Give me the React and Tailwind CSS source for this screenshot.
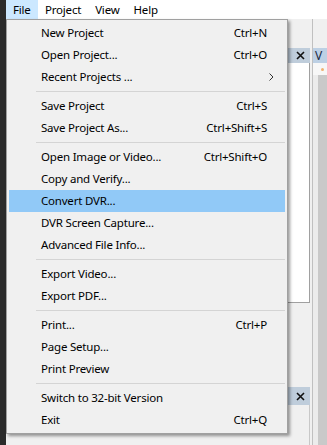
import React from 'react'

const FONT = { fontFamily: '"Noto Sans", "Segoe UI", Arial, sans-serif' }

const MENU = [
  { label: 'New Project', key: 'Ctrl+N' },
  { label: 'Open Project...', key: 'Ctrl+O' },
  { label: 'Recent Projects ...', sub: true },
  'sep',
  { label: 'Save Project', key: 'Ctrl+S' },
  { label: 'Save Project As...', key: 'Ctrl+Shift+S' },
  'sep',
  { label: 'Open Image or Video...', key: 'Ctrl+Shift+O' },
  { label: 'Copy and Verify...' },
  { label: 'Convert DVR...', active: true },
  { label: 'DVR Screen Capture...' },
  { label: 'Advanced File Info...' },
  'sep',
  { label: 'Export Video...' },
  { label: 'Export PDF...' },
  'sep',
  { label: 'Print...', key: 'Ctrl+P' },
  { label: 'Page Setup...' },
  { label: 'Print Preview' },
  'sep',
  { label: 'Switch to 32-bit Version' },
  { label: 'Exit', key: 'Ctrl+Q' },
]

function CloseX() {
  return (
    <svg width="9" height="9" viewBox="0 0 9 9">
      <path d="M1 1 L8 8 M8 1 L1 8" stroke="#111" strokeWidth="1.6" />
    </svg>
  )
}

function FileMenu() {
  return (
    <div className="absolute left-[6px] top-[19px] w-[282px] h-[415px] bg-[#f0f0f0] border border-[#a0a0a0] shadow-[2px_2px_3px_rgba(0,0,0,0.4)] py-[2px] text-[11.5px] tracking-[-0.2px] text-black">
      {MENU.map((item, i) => {
        if (item === 'sep') {
          return (
            <div key={i} className="h-[7px] flex items-center ml-[29px] mr-[2px]">
              <div className="h-px w-full bg-[#d4d4d4]" />
            </div>
          )
        }
        return (
          <div
            key={i}
            className={`h-[22px] mx-[2px] flex items-center pl-[32px] pr-[18px] ${item.active ? 'bg-[#91c9f7]' : ''}`}
          >
            <span className="flex-1 whitespace-nowrap">{item.label}</span>
            {item.key && <span className="whitespace-nowrap">{item.key}</span>}
            {item.sub && (
              <svg width="5" height="8" viewBox="0 0 5 8" className="mr-[-7px]">
                <path d="M0.5 0.5 L4 4 L0.5 7.5" stroke="#333" fill="none" strokeWidth="1" />
              </svg>
            )}
          </div>
        )
      })}
    </div>
  )
}

export default function App() {
  return (
    <div className="relative w-[327px] h-[445px] overflow-hidden flex bg-[#f0f0f0]" style={FONT}>
      {/* dark edge of the window behind */}
      <div className="w-[6px] bg-[#2b2b2b]" />

      <div className="flex-1 flex flex-col">
        {/* menu bar */}
        <div className="h-[19px] bg-white flex items-stretch text-[11.5px] tracking-[-0.2px] text-black">
          <div className="w-[32px] pl-[7px] flex items-center bg-[#cce8ff]">File</div>
          <div className="px-[7px] flex items-center">Project</div>
          <div className="px-[7px] flex items-center">View</div>
          <div className="px-[7px] flex items-center">Help</div>
        </div>

        {/* workspace behind the menu */}
        <div className="flex-1 flex">
          <div className="flex-1" />

          {/* docked panels column */}
          <div className="w-[22px] flex flex-col">
            <div className="h-[29px]" />
            <div className="h-[15px] bg-[#bfcddb] flex items-center justify-center pl-[2px]">
              <CloseX />
            </div>
            <div className="h-[240px] bg-white border-r border-b border-[#a0a0a0]" />
            <div className="h-[84px]" />
            <div className="h-[18px] bg-[#bfcddb] flex items-center justify-center pl-[2px]">
              <CloseX />
            </div>
            <div className="flex-1 border-r border-[#c8c8c8]" />
          </div>

          {/* splitter */}
          <div className="w-[3px] border-r border-[#c0c0c0]" />

          {/* right panel */}
          <div className="w-[14px] flex flex-col">
            <div className="h-[29px]" />
            <div className="h-[15px] bg-[#bdd0e4] flex items-center pl-[2px] text-[12px] text-[#1c2a40]">V</div>
            <div className="h-[12px] bg-[#f7f7f7] flex items-center pl-[8px]">
              <div className="w-[3px] h-[3px] rounded-full bg-[#f0b070]" />
            </div>
            <div className="flex-1 flex">
              <div className="w-[5px] bg-[#ececec]" />
              <div className="flex-1 bg-[#c9c9c9]" />
            </div>
          </div>
        </div>
      </div>

      <FileMenu />
    </div>
  )
}
